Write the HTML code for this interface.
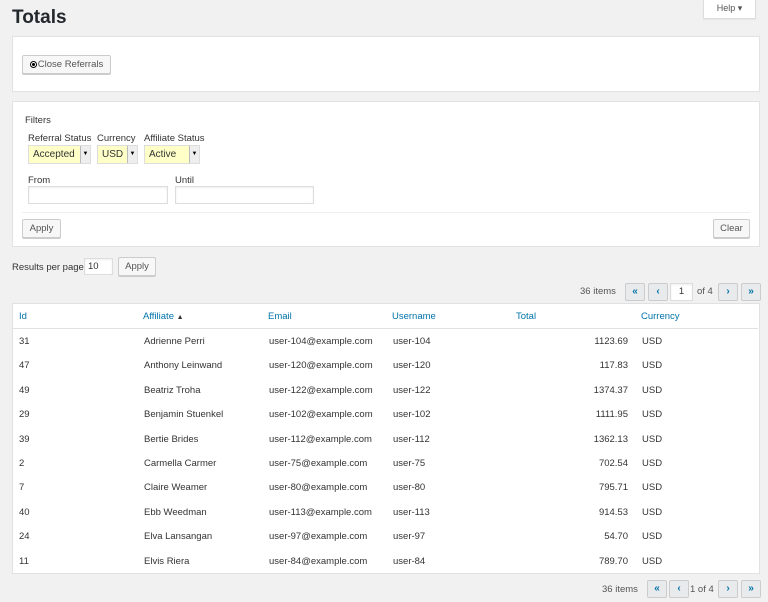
<!DOCTYPE html>
<html><head><meta charset="utf-8"><style>
*{box-sizing:border-box;margin:0;padding:0}
body{width:768px;height:602px;background:#f1f1f1;font-family:"Liberation Sans",sans-serif;font-size:9.5px;color:#444;position:relative;overflow:hidden}
.a{position:absolute}
.box{background:#fff;border:1px solid #e2e2e2}
.btn{position:absolute;background:#f7f7f7;border:1px solid #ccc;border-radius:2px;box-shadow:0 1px 0 #ccc;font-size:9.5px;color:#555;display:flex;align-items:center;justify-content:center}
.sel{position:absolute;background:#ffffc8;border:1px solid #ddd;font-size:10px;color:#333;padding:3px 4px}
.sel i{position:absolute;right:0;top:0;bottom:0;width:10px;background:#eee;border-left:1px solid #bbb;font-style:normal;font-size:6px;text-align:center;line-height:17px;color:#000}
.inp{position:absolute;background:#fff;border:1px solid #ddd;box-shadow:inset 0 1px 2px rgba(0,0,0,.07)}
.pb{position:absolute;width:20px;height:18px;background:#e8eaec;border:1px solid #ccc;border-radius:2px;color:#0073aa;font-size:10px;font-weight:bold;text-align:center;line-height:15px}
.r{position:absolute;left:0;width:745px;height:24px;font-size:9.5px;color:#333}
.r span{position:absolute;top:7px}
.h span{color:#0073aa;font-size:9.5px}
</style></head><body>
<div class="a" style="left:12px;top:7px;font-size:19px;font-weight:bold;color:#23282d">Totals</div>
<div class="a" style="left:703px;top:-1px;width:53px;height:20px;background:#fff;border:1px solid #ddd;border-top:0;box-shadow:0 1px 1px rgba(0,0,0,.05);font-size:9px;color:#555;text-align:center;line-height:19px">Help ▾</div>

<div class="a box" style="left:12px;top:36px;width:748px;height:56px"></div>
<div class="btn" style="left:22px;top:55px;width:89px;height:19px"><span style="display:inline-block;width:7px;height:7px;border:1.5px solid #000;border-radius:50%;background:radial-gradient(#000 40%,#fff 45%);margin-right:1px"></span>Close Referrals</div>

<div class="a box" style="left:12px;top:101px;width:748px;height:146px"></div>
<div class="a" style="left:25px;top:115px;color:#333">Filters</div>
<div class="a" style="left:28px;top:133px;color:#333">Referral Status</div>
<div class="a" style="left:97px;top:133px;color:#333">Currency</div>
<div class="a" style="left:144px;top:133px;color:#333">Affiliate Status</div>
<div class="sel" style="left:28px;top:145px;width:63px;height:19px">Accepted<i>▼</i></div>
<div class="sel" style="left:97px;top:145px;width:41px;height:19px">USD<i>▼</i></div>
<div class="sel" style="left:144px;top:145px;width:56px;height:19px">Active<i>▼</i></div>
<div class="a" style="left:28px;top:175px;color:#333">From</div>
<div class="a" style="left:175px;top:175px;color:#333">Until</div>
<div class="inp" style="left:28px;top:186px;width:140px;height:18px"></div>
<div class="inp" style="left:175px;top:186px;width:139px;height:18px"></div>
<div class="a" style="left:22px;top:212px;width:728px;height:1px;background:#eee"></div>
<div class="btn" style="left:22px;top:219px;width:39px;height:19px">Apply</div>
<div class="btn" style="left:713px;top:219px;width:37px;height:19px">Clear</div>

<div class="a" style="left:12px;top:262px;color:#333">Results per page</div>
<div class="inp" style="left:84px;top:258px;width:29px;height:17px;font-size:9.5px;padding:2px 3px;color:#333">10</div>
<div class="btn" style="left:118px;top:257px;width:38px;height:19px">Apply</div>

<div class="a" style="left:580px;top:286px;color:#555">36 items</div>
<div class="pb" style="left:625px;top:283px">«</div>
<div class="pb" style="left:648px;top:283px">‹</div>
<div class="inp" style="left:670px;top:283px;width:23px;height:18px;text-align:center;line-height:16px;color:#333">1</div>
<div class="a" style="left:697px;top:286px;color:#555">of 4</div>
<div class="pb" style="left:718px;top:283px">›</div>
<div class="pb" style="left:741px;top:283px">»</div>

<div class="a box" style="left:12px;top:303px;width:748px;height:271px;border-color:#e1e1e1">
<div class="r h" style="top:0;height:25px;border-bottom:1px solid #e1e1e1"><span style="left:6px;top:7px">Id</span><span style="left:130px;top:7px">Affiliate <b style="color:#333;font-size:7px">▲</b></span><span style="left:255px;top:7px">Email</span><span style="left:379px;top:7px">Username</span><span style="left:503px;top:7px">Total</span><span style="left:628px;top:7px">Currency</span></div>
<div id="rows"></div>
</div>
<script>
var d=[["31","Adrienne Perri","104","1123.69"],["47","Anthony Leinwand","120","117.83"],["49","Beatriz Troha","122","1374.37"],["29","Benjamin Stuenkel","102","1111.95"],["39","Bertie Brides","112","1362.13"],["2","Carmella Carmer","75","702.54"],["7","Claire Weamer","80","795.71"],["40","Ebb Weedman","113","914.53"],["24","Elva Lansangan","97","54.70"],["11","Elvis Riera","84","789.70"]];
var h="";d.forEach(function(r,i){var t=25+i*24.4;h+='<div class="r" style="top:'+t+'px"><span style="left:6px">'+r[0]+'</span><span style="left:131px">'+r[1]+'</span><span style="left:256px">user-'+r[2]+'@example.com</span><span style="left:380px">user-'+r[2]+'</span><span style="right:130px">'+r[3]+'</span><span style="left:629px">USD</span></div>'});
document.getElementById("rows").innerHTML=h;
</script>

<div class="a" style="left:602px;top:584px;color:#555">36 items</div>
<div class="pb" style="left:647px;top:580px">«</div>
<div class="pb" style="left:669px;top:580px">‹</div>
<div class="a" style="left:690px;top:584px;color:#555">1 of 4</div>
<div class="pb" style="left:718px;top:580px">›</div>
<div class="pb" style="left:741px;top:580px">»</div>
</body></html>
